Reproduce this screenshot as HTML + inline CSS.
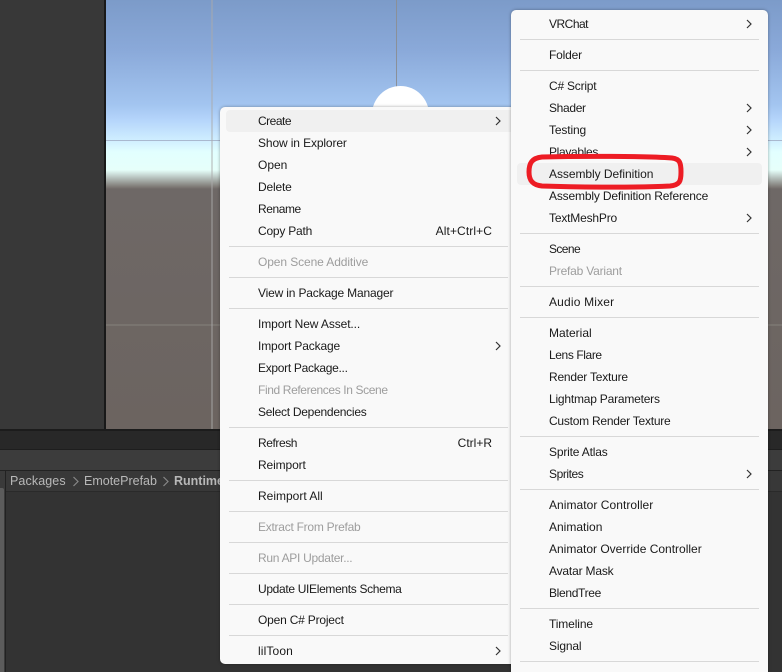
<!DOCTYPE html>
<html><head><meta charset="utf-8">
<style>
html,body{margin:0;padding:0;overflow:hidden}
body{width:782px;height:672px;position:relative;background:#333;font-family:"Liberation Sans",sans-serif}
#r{position:absolute;left:0;top:0;width:782px;height:672px;overflow:hidden}
.a{position:absolute}
.m{position:absolute;background:#f9f9f9;border-radius:5px;box-shadow:0 0 3px rgba(0,0,0,.35)}
.t{position:absolute;font-size:12px;line-height:16px;height:16px;color:#1a1a1a;white-space:nowrap;margin-top:-8px}
.d{color:#9d9d9d}
.s{position:absolute;height:1px;background:#d8d8d8}
.h{position:absolute;background:#f0f0f0;border-radius:4px}
.b{position:absolute;font-size:12.5px;line-height:16px;color:#b8b8b8;white-space:nowrap}
</style></head><body><div id="r">
<div class="a" style="left:0;top:0;width:104px;height:429px;background:#383838"></div>
<div class="a" style="left:104px;top:0;width:2px;height:429px;background:#191919"></div>
<div class="a" style="left:106px;top:0;width:676px;height:429px;background:linear-gradient(#7c9bc9 0,#8aa9d9 50px,#a3c5f0 105px,#b5d5fb 120px,#cfeeff 140px,#e2ffff 152px,#e6fffa 170px,#c8d8d4 175px,#7d7874 187px,#6e6866 189px,#6c6460 429px)"></div>
<div class="a" style="left:106px;top:140px;width:676px;height:1px;background:#a9b9cf"></div>
<div class="a" style="left:106px;top:324px;width:676px;height:2px;background:#79746f"></div>
<div class="a" style="left:211px;top:0;width:2px;height:429px;background:rgba(170,170,170,.45)"></div>
<div class="a" style="left:396px;top:0;width:1px;height:90px;background:#8a9099"></div>
<div class="a" style="left:372px;top:86px;width:57px;height:57px;border-radius:50%;background:#fff"></div>
<div class="a" style="left:0;top:429px;width:782px;height:2px;background:#1c1c1c"></div>
<div class="a" style="left:0;top:431px;width:782px;height:18px;background:#282828"></div>
<div class="a" style="left:0;top:449px;width:782px;height:1px;background:#1e1e1e"></div>
<div class="a" style="left:0;top:450px;width:782px;height:20px;background:#3c3c3c"></div>
<div class="a" style="left:0;top:470px;width:782px;height:1px;background:#222"></div>
<div class="a" style="left:0;top:471px;width:782px;height:20px;background:#383838"></div>
<div class="a" style="left:0;top:491px;width:782px;height:1px;background:#2a2a2a"></div>
<div class="a" style="left:0;top:471px;width:5px;height:201px;background:#3a3a3a"></div>
<div class="a" style="left:0;top:488px;width:4px;height:184px;background:#5c5c5c;border-radius:0 2px 0 0"></div>
<div class="a" style="left:5px;top:471px;width:1px;height:201px;background:#222"></div>
<div class="b" style="left:10px;top:473px;letter-spacing:.1px">Packages</div>
<svg class="a" style="left:72px;top:476px" width="8" height="11"><path d="M1.500 1L6 5.500L1.500 10" fill="none" stroke="#888" stroke-width="1.200"/></svg>
<div class="b" style="left:84px;top:473px">EmotePrefab</div>
<svg class="a" style="left:162px;top:476px" width="8" height="11"><path d="M1.500 1L6 5.500L1.500 10" fill="none" stroke="#888" stroke-width="1.200"/></svg>
<div class="b" style="left:174px;top:473px;font-weight:bold">Runtime</div>

<div class="m" style="left:220px;top:107px;width:300px;height:557px"></div>
<div class="h" style="left:226px;top:110px;width:290px;height:22px"></div>
<div class="t" style="left:258px;top:121px;letter-spacing:-.5px">Create</div>
<div class="t" style="left:258px;top:143px;letter-spacing:-.12px">Show in Explorer</div>
<div class="t" style="left:258px;top:165px">Open</div>
<div class="t" style="left:258px;top:187px;letter-spacing:-.17px">Delete</div>
<div class="t" style="left:258px;top:209px;letter-spacing:-.43px">Rename</div>
<div class="t" style="left:258px;top:231px;letter-spacing:-.22px">Copy Path</div>
<div class="t" style="right:290px;top:231px;letter-spacing:.1px">Alt+Ctrl+C</div>
<div class="s" style="left:229px;top:246px;width:279px"></div>
<div class="t d" style="left:258px;top:262px;letter-spacing:-.1px">Open Scene Additive</div>
<div class="s" style="left:229px;top:277px;width:279px"></div>
<div class="t" style="left:258px;top:293px;letter-spacing:-.17px">View in Package Manager</div>
<div class="s" style="left:229px;top:308px;width:279px"></div>
<div class="t" style="left:258px;top:324px;letter-spacing:-.1px">Import New Asset...</div>
<div class="t" style="left:258px;top:346px;letter-spacing:-.14px">Import Package</div>
<div class="t" style="left:258px;top:368px;letter-spacing:-.3px">Export Package...</div>
<div class="t d" style="left:258px;top:390px;letter-spacing:-.38px">Find References In Scene</div>
<div class="t" style="left:258px;top:412px;letter-spacing:-.26px">Select Dependencies</div>
<div class="s" style="left:229px;top:427px;width:279px"></div>
<div class="t" style="left:258px;top:443px;letter-spacing:-.43px">Refresh</div>
<div class="t" style="right:290px;top:443px">Ctrl+R</div>
<div class="t" style="left:258px;top:465px;letter-spacing:-.12px">Reimport</div>
<div class="s" style="left:229px;top:480px;width:279px"></div>
<div class="t" style="left:258px;top:496px">Reimport All</div>
<div class="s" style="left:229px;top:511px;width:279px"></div>
<div class="t d" style="left:258px;top:527px;letter-spacing:-.26px">Extract From Prefab</div>
<div class="s" style="left:229px;top:542px;width:279px"></div>
<div class="t d" style="left:258px;top:558px;letter-spacing:-.28px">Run API Updater...</div>
<div class="s" style="left:229px;top:573px;width:279px"></div>
<div class="t" style="left:258px;top:589px;letter-spacing:-.33px">Update UIElements Schema</div>
<div class="s" style="left:229px;top:604px;width:279px"></div>
<div class="t" style="left:258px;top:620px;letter-spacing:-.2px">Open C# Project</div>
<div class="s" style="left:229px;top:635px;width:279px"></div>
<div class="t" style="left:258px;top:651px;letter-spacing:.14px">lilToon</div>

<svg class="a" style="left:495px;top:116px" width="7" height="10"><path d="M1 1L5 5L1 9" fill="none" stroke="#333" stroke-width="1.200"/></svg>
<svg class="a" style="left:495px;top:341px" width="7" height="10"><path d="M1 1L5 5L1 9" fill="none" stroke="#333" stroke-width="1.200"/></svg>
<svg class="a" style="left:495px;top:646px" width="7" height="10"><path d="M1 1L5 5L1 9" fill="none" stroke="#333" stroke-width="1.200"/></svg>

<div class="m" style="left:511px;top:10px;width:257px;height:680px"></div>
<div class="h" style="left:517px;top:163px;width:245px;height:22px"></div>
<div class="t" style="left:549px;top:24px;letter-spacing:-.5px">VRChat</div>
<div class="s" style="left:520px;top:39px;width:239px"></div>
<div class="t" style="left:549px;top:55px;letter-spacing:-.17px">Folder</div>
<div class="s" style="left:520px;top:70px;width:239px"></div>
<div class="t" style="left:549px;top:86px;letter-spacing:-.22px">C# Script</div>
<div class="t" style="left:549px;top:108px;letter-spacing:-.33px">Shader</div>
<div class="t" style="left:549px;top:130px;letter-spacing:-.14px">Testing</div>
<div class="t" style="left:549px;top:152px;letter-spacing:-.33px">Playables</div>
<div class="t" style="left:549px;top:174px;letter-spacing:-.05px">Assembly Definition</div>
<div class="t" style="left:549px;top:196px;letter-spacing:-.17px">Assembly Definition Reference</div>
<div class="t" style="left:549px;top:218px;letter-spacing:-.18px">TextMeshPro</div>
<div class="s" style="left:520px;top:233px;width:239px"></div>
<div class="t" style="left:549px;top:249px;letter-spacing:-.6px">Scene</div>
<div class="t d" style="left:549px;top:271px;letter-spacing:-.21px">Prefab Variant</div>
<div class="s" style="left:520px;top:286px;width:239px"></div>
<div class="t" style="left:549px;top:302px;letter-spacing:.18px">Audio Mixer</div>
<div class="s" style="left:520px;top:317px;width:239px"></div>
<div class="t" style="left:549px;top:333px">Material</div>
<div class="t" style="left:549px;top:355px;letter-spacing:-.4px">Lens Flare</div>
<div class="t" style="left:549px;top:377px;letter-spacing:-.21px">Render Texture</div>
<div class="t" style="left:549px;top:399px;letter-spacing:-.21px">Lightmap Parameters</div>
<div class="t" style="left:549px;top:421px;letter-spacing:-.24px">Custom Render Texture</div>
<div class="s" style="left:520px;top:436px;width:239px"></div>
<div class="t" style="left:549px;top:452px;letter-spacing:-.18px">Sprite Atlas</div>
<div class="t" style="left:549px;top:474px;letter-spacing:-.43px">Sprites</div>
<div class="s" style="left:520px;top:489px;width:239px"></div>
<div class="t" style="left:549px;top:505px;letter-spacing:.05px">Animator Controller</div>
<div class="t" style="left:549px;top:527px">Animation</div>
<div class="t" style="left:549px;top:549px">Animator Override Controller</div>
<div class="t" style="left:549px;top:571px;letter-spacing:-.18px">Avatar Mask</div>
<div class="t" style="left:549px;top:593px;letter-spacing:-.33px">BlendTree</div>
<div class="s" style="left:520px;top:608px;width:239px"></div>
<div class="t" style="left:549px;top:624px;letter-spacing:-.12px">Timeline</div>
<div class="t" style="left:549px;top:646px;letter-spacing:-.17px">Signal</div>
<div class="s" style="left:520px;top:661px;width:239px"></div>

<svg class="a" style="left:746px;top:19px" width="7" height="10"><path d="M1 1L5 5L1 9" fill="none" stroke="#333" stroke-width="1.200"/></svg>
<svg class="a" style="left:746px;top:103px" width="7" height="10"><path d="M1 1L5 5L1 9" fill="none" stroke="#333" stroke-width="1.200"/></svg>
<svg class="a" style="left:746px;top:125px" width="7" height="10"><path d="M1 1L5 5L1 9" fill="none" stroke="#333" stroke-width="1.200"/></svg>
<svg class="a" style="left:746px;top:147px" width="7" height="10"><path d="M1 1L5 5L1 9" fill="none" stroke="#333" stroke-width="1.200"/></svg>
<svg class="a" style="left:746px;top:213px" width="7" height="10"><path d="M1 1L5 5L1 9" fill="none" stroke="#333" stroke-width="1.200"/></svg>
<svg class="a" style="left:746px;top:469px" width="7" height="10"><path d="M1 1L5 5L1 9" fill="none" stroke="#333" stroke-width="1.200"/></svg>

<svg class="a" style="left:520px;top:150px" width="172" height="44"><path d="M22 7C60 6 125 6 152 8C160 9 161 13 161 22C161 31 160 35 150 36C110 38 50 37 22 36C12 35 9 30 9 22C9 13 12 8 22 7Z" fill="none" stroke="#ed1c24" stroke-width="5"/></svg>
</div></body></html>
